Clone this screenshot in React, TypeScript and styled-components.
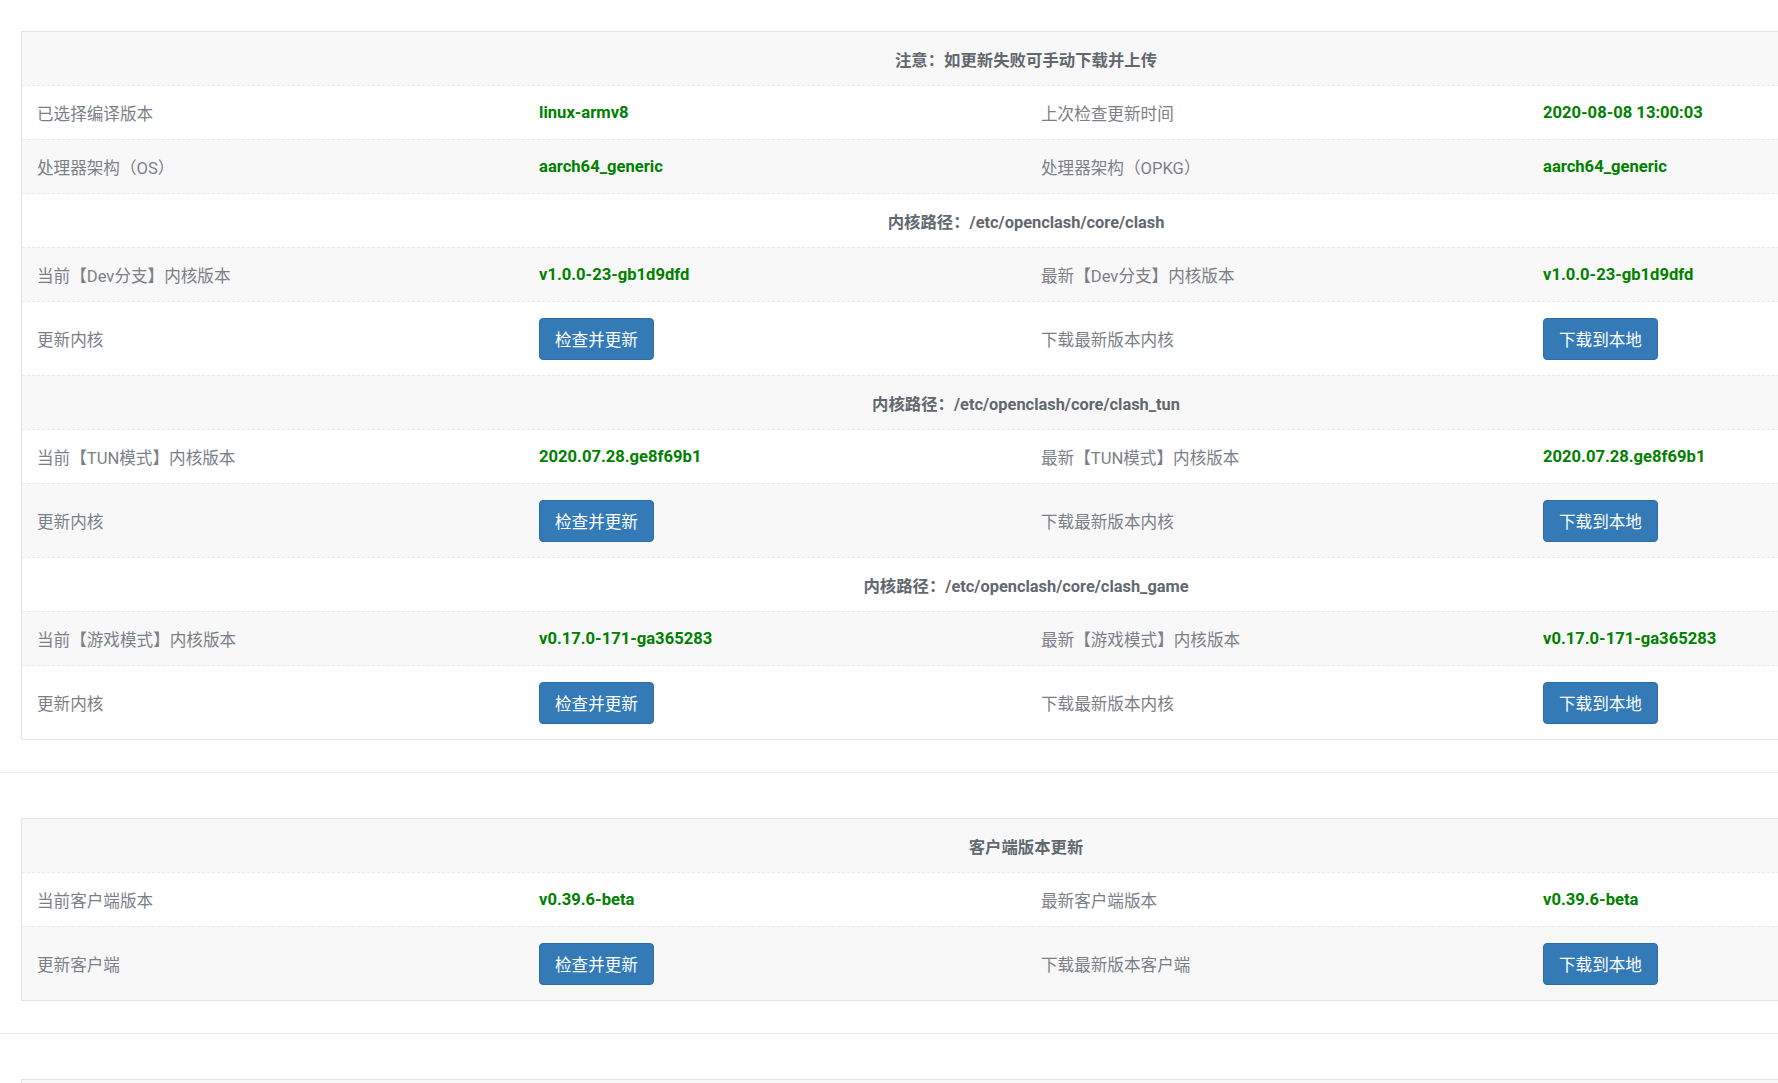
import React from "react";
import styled, { createGlobalStyle } from "styled-components";

const Global = createGlobalStyle`
  html, body {
    margin: 0;
    padding: 0;
    background: #ffffff;
    overflow: hidden;
  }
  body {
    font-family: Roboto, "Noto Sans CJK SC", "Noto Sans", sans-serif;
    font-size: 16.6px;
    color: #7b8088;
  }
`;

const Page = styled.div`
  width: 1778px;
  height: 1083px;
  overflow: hidden;
`;

const Section = styled.section<{ $first?: boolean }>`
  border-top: ${(p) => (p.$first ? "none" : "1px solid #ececec")};
  padding: ${(p) => (p.$first ? "31px" : "45px")} 0 32px 21px;
`;

const Table = styled.div`
  width: 2010px;
  border: 1px solid #e6e6e6;
  box-sizing: border-box;
`;

const Row = styled.div<{ $tall?: boolean; $odd?: boolean; $first?: boolean }>`
  display: grid;
  grid-template-columns: repeat(4, 1fr);
  align-items: center;
  height: ${(p) => (p.$tall ? "73px" : "53px")};
  background: ${(p) => (p.$odd ? "#f8f8f8" : "#ffffff")};
  border-top: ${(p) => (p.$first ? "none" : "1px dashed #e8e8e8")};
`;

const HeadRow = styled(Row)`
  grid-template-columns: 1fr;
  justify-items: center;
`;

const HeadText = styled.div`
  font-weight: 700;
  color: #62686f;
  font-size: 16.4px;
`;

const Label = styled.div`
  padding-left: 15px;
  color: #7b8088;
  white-space: nowrap;
`;

const Value = styled.div`
  padding-left: 15px;
  color: #008000;
  font-weight: 700;
  white-space: nowrap;
`;

const Cell = styled.div`
  padding-left: 15px;
  display: flex;
  align-items: center;
`;

const Button = styled.button`
  height: 42px;
  padding: 0 15px;
  border: 1px solid #2e6da4;
  border-radius: 4px;
  background: #337ab7;
  color: #ffffff;
  font-family: Roboto, "Noto Sans CJK SC", sans-serif;
  font-size: 16.6px;
  cursor: pointer;
  white-space: nowrap;
`;

type RowDef =
  | { kind: "head"; text: string }
  | { kind: "info"; l1: string; v1: string; l2: string; v2: string }
  | { kind: "action"; l1: string; b1: string; l2: string; b2: string };

const kernel: RowDef[] = [
  { kind: "head", text: "注意：如更新失败可手动下载并上传" },
  { kind: "info", l1: "已选择编译版本", v1: "linux-armv8", l2: "上次检查更新时间", v2: "2020-08-08 13:00:03" },
  { kind: "info", l1: "处理器架构（OS）", v1: "aarch64_generic", l2: "处理器架构（OPKG）", v2: "aarch64_generic" },
  { kind: "head", text: "内核路径：/etc/openclash/core/clash" },
  { kind: "info", l1: "当前【Dev分支】内核版本", v1: "v1.0.0-23-gb1d9dfd", l2: "最新【Dev分支】内核版本", v2: "v1.0.0-23-gb1d9dfd" },
  { kind: "action", l1: "更新内核", b1: "检查并更新", l2: "下载最新版本内核", b2: "下载到本地" },
  { kind: "head", text: "内核路径：/etc/openclash/core/clash_tun" },
  { kind: "info", l1: "当前【TUN模式】内核版本", v1: "2020.07.28.ge8f69b1", l2: "最新【TUN模式】内核版本", v2: "2020.07.28.ge8f69b1" },
  { kind: "action", l1: "更新内核", b1: "检查并更新", l2: "下载最新版本内核", b2: "下载到本地" },
  { kind: "head", text: "内核路径：/etc/openclash/core/clash_game" },
  { kind: "info", l1: "当前【游戏模式】内核版本", v1: "v0.17.0-171-ga365283", l2: "最新【游戏模式】内核版本", v2: "v0.17.0-171-ga365283" },
  { kind: "action", l1: "更新内核", b1: "检查并更新", l2: "下载最新版本内核", b2: "下载到本地" },
];

const client: RowDef[] = [
  { kind: "head", text: "客户端版本更新" },
  { kind: "info", l1: "当前客户端版本", v1: "v0.39.6-beta", l2: "最新客户端版本", v2: "v0.39.6-beta" },
  { kind: "action", l1: "更新客户端", b1: "检查并更新", l2: "下载最新版本客户端", b2: "下载到本地" },
];

function renderRows(rows: RowDef[]) {
  return rows.map((r, i) => {
    const odd = i % 2 === 0;
    const first = i === 0;
    if (r.kind === "head") {
      return (
        <HeadRow key={i} $odd={odd} $first={first}>
          <HeadText>{r.text}</HeadText>
        </HeadRow>
      );
    }
    if (r.kind === "info") {
      return (
        <Row key={i} $odd={odd} $first={first}>
          <Label>{r.l1}</Label>
          <Value>{r.v1}</Value>
          <Label>{r.l2}</Label>
          <Value>{r.v2}</Value>
        </Row>
      );
    }
    return (
      <Row key={i} $odd={odd} $first={first} $tall>
        <Label>{r.l1}</Label>
        <Cell>
          <Button>{r.b1}</Button>
        </Cell>
        <Label>{r.l2}</Label>
        <Cell>
          <Button>{r.b2}</Button>
        </Cell>
      </Row>
    );
  });
}

export default function App() {
  return (
    <Page>
      <Global />
      <Section $first>
        <Table>{renderRows(kernel)}</Table>
      </Section>
      <Section>
        <Table>{renderRows(client)}</Table>
      </Section>
      <Section>
        <Table>
          <Row $odd $first />
        </Table>
      </Section>
    </Page>
  );
}
